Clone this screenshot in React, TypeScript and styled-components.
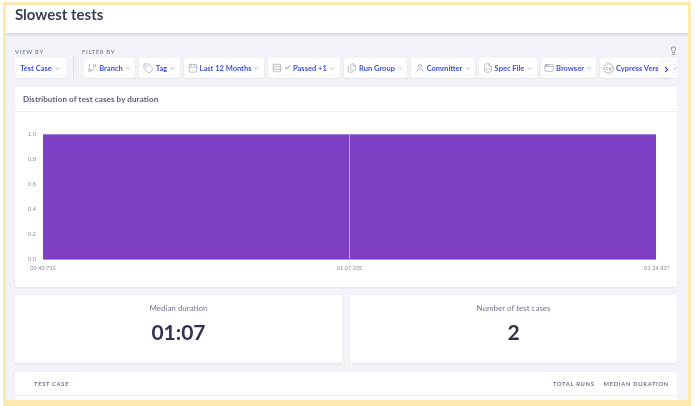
import React from 'react';
import styled, { createGlobalStyle } from 'styled-components';
import { ChevronDown, ChevronRight, GitBranch, Tag, Calendar, Rows3, Check, User, FileCode, AppWindow, Lightbulb, Files } from 'lucide-react';

const GlobalStyle = createGlobalStyle`
  html, body {
    margin: 0;
    padding: 0;
    background: #fff;
  }
  body {
    font-family: "Lato", "Noto Sans", sans-serif;
  }
`;

// the source screenshot is a soft, scaled-up capture
const Frame = styled.div`
  box-sizing: border-box;
  width: 688px;
  height: 404px;
  margin: 2px 0 0 3px;
  border: solid #fde9ae;
  border-width: 3px 3px 6px 3px;
  background: #f2f3f9;
  overflow: hidden;
  display: flex;
  flex-direction: column;
  filter: blur(0.5px);
`;

const Header = styled.header`
  flex: none;
  height: 28px;
  background: #fff;
  padding-left: 9px;
  box-shadow: 0 1px 3px rgba(60, 65, 100, 0.25);
  position: relative;
`;

const Title = styled.h1`
  margin: 0;
  font-size: 15px;
  line-height: 18px;
  font-weight: 700;
  color: #3a3e55;
`;

const Body = styled.main`
  flex: 1;
  min-height: 0;
  padding: 16px 11px 0 9px;
  display: flex;
  flex-direction: column;
  position: relative;
`;

const Toolbar = styled.div`
  display: flex;
  align-items: flex-end;
  height: 30px;
  margin-bottom: 8px;
`;

const Group = styled.div`
  min-width: 0;
  flex: ${p => (p.$grow ? 1 : 'none')};
  position: relative;
`;

const GroupLabel = styled.div`
  font-size: 5.8px;
  line-height: 7px;
  font-weight: 700;
  letter-spacing: 0.7px;
  color: #8a8ea6;
  margin: 0 0 3px ${p => p.$shift || 0}px;
`;

const Divider = styled.div`
  flex: none;
  width: 1px;
  height: 24px;
  background: #e0e2ec;
  margin: 0 10px 0 7px;
`;

const ChipRow = styled.div`
  display: flex;
  gap: 4px;
  overflow: hidden;
  padding-bottom: 1px;
`;

const Chip = styled.div`
  flex: none;
  box-sizing: border-box;
  width: ${p => p.$w}px;
  height: 20px;
  background: #fff;
  border-radius: 2px;
  box-shadow: 0 1px 2px rgba(60, 65, 100, 0.12);
  display: flex;
  align-items: center;
  justify-content: center;
  gap: 2px;
  font-size: 7.5px;
  font-weight: 700;
  color: #3f4fdc;
  white-space: nowrap;
  overflow: hidden;

  svg {
    flex: none;
  }
`;

const Green = styled.span`
  color: #1f9d6b;
  display: inline-flex;
  align-items: center;
  gap: 1px;
`;

const ScrollButton = styled.div`
  position: absolute;
  right: 3px;
  bottom: 2px;
  width: 16px;
  height: 16px;
  border-radius: 50%;
  background: #fff;
  box-shadow: 0 0 3px rgba(60, 65, 100, 0.2);
  display: flex;
  align-items: center;
  justify-content: center;
  color: #3f4bb8;
`;

const Hint = styled.div`
  position: absolute;
  right: 10px;
  top: 13px;
  color: #75777f;
  display: flex;
`;

const Card = styled.section`
  background: #fff;
  border-radius: 2px;
  box-shadow: 0 1px 2px rgba(60, 65, 100, 0.08);
`;

const ChartCard = styled(Card)`
  flex: none;
  height: 200px;
  margin-bottom: 8px;
  display: flex;
  flex-direction: column;
`;

const ChartTitle = styled.div`
  flex: none;
  box-sizing: border-box;
  height: 25px;
  padding: 0 8px;
  display: flex;
  align-items: center;
  border-bottom: 1px solid #eceef5;
  font-size: 8px;
  font-weight: 700;
  letter-spacing: 0.11px;
  color: #5a5e74;
`;

const ChartSvg = styled.svg`
  display: block;
  flex: 1;
  width: 100%;
  min-height: 0;
`;

const AxisText = styled.text`
  font-family: "Liberation Sans", sans-serif;
  font-size: 5.7px;
  fill: #8b8d96;
`;

const StatRow = styled.div`
  flex: none;
  display: grid;
  grid-template-columns: 1fr 1fr;
  gap: 8px;
  margin-bottom: 9px;
`;

const StatCard = styled(Card)`
  height: 68px;
  box-sizing: border-box;
  padding-top: 9px;
  text-align: center;
`;

const StatLabel = styled.div`
  font-size: 8px;
  line-height: 9px;
  color: #74788f;
`;

const StatValue = styled.div`
  margin-top: 5px;
  font-size: 21px;
  line-height: 28px;
  font-weight: 700;
  color: #2f3350;
`;

const TableCard = styled(Card)`
  flex: none;
  height: 40px;
`;

const TableHead = styled.div`
  box-sizing: border-box;
  height: 24px;
  padding: 0 8px 0 19px;
  display: flex;
  align-items: center;
  gap: 9px;
  border-bottom: 1px solid #eceef5;
`;

const HeadCell = styled.div`
  font-size: 5.8px;
  font-weight: 700;
  letter-spacing: 0.68px;
  color: #6f738c;
  margin-right: ${p => (p.$first ? 'auto' : '0')};
`;

const Chevron = () => <ChevronDown size={7} strokeWidth={2} color="#7f88b8" />;

const CypressIcon = () => (
  <svg width="11" height="11" viewBox="0 0 22 22" fill="none" stroke="#8b8e9c" strokeWidth="1.4">
    <circle cx="11" cy="11" r="9.5" />
    <path d="M9.5 8.8a2.6 2.6 0 1 0 0 4.4M12 8.5l1.8 5M16.5 8.5l-2.6 7-1.4.7" />
  </svg>
);

const iconProps = { size: 10, strokeWidth: 1.3, color: '#8b8e9c' };

const filters = [
  { w: 51, icon: <GitBranch {...iconProps} />, label: 'Branch' },
  { w: 41, icon: <Tag {...iconProps} size={11} />, label: 'Tag' },
  { w: 80, icon: <Calendar {...iconProps} />, label: 'Last 12 Months' },
  {
    w: 72,
    icon: <Rows3 {...iconProps} />,
    label: (
      <>
        <Green><Check size={7} strokeWidth={3} /></Green> Passed +1
      </>
    ),
  },
  { w: 63, icon: <Files {...iconProps} />, label: 'Run Group' },
  { w: 64, icon: <User {...iconProps} />, label: 'Committer' },
  { w: 58, icon: <FileCode {...iconProps} />, label: 'Spec File' },
  { w: 55, icon: <AppWindow {...iconProps} />, label: 'Browser' },
  { w: 81, icon: <CypressIcon />, label: 'Cypress Version' },
];

const yTicks = ['1.0', '0.8', '0.6', '0.4', '0.2', '0.0'];

const App: React.FC = () => (
  <>
    <GlobalStyle />
    <Frame>
      <Header>
        <Title>Slowest tests</Title>
      </Header>
      <Body>
        <Hint>
          <Lightbulb size={9} strokeWidth={2} />
        </Hint>
        <Toolbar>
          <Group>
            <GroupLabel>VIEW BY</GroupLabel>
            <ChipRow>
              <Chip $w={51}>
                Test Case <Chevron />
              </Chip>
            </ChipRow>
          </Group>
          <Divider />
          <Group $grow>
            <GroupLabel $shift={-2}>FILTER BY</GroupLabel>
            <ChipRow>
              {filters.map((f, i) => (
                <Chip key={i} $w={f.w}>
                  {f.icon}
                  <span>{f.label}</span>
                  <Chevron />
                </Chip>
              ))}
            </ChipRow>
            <ScrollButton>
              <ChevronRight size={9} strokeWidth={3} />
            </ScrollButton>
          </Group>
        </Toolbar>

        <ChartCard>
          <ChartTitle>Distribution of test cases by duration</ChartTitle>
          <ChartSvg viewBox="0 0 662 175" preserveAspectRatio="none">
            {yTicks.map((t, i) => (
              <AxisText key={t} x="21" y={23.5 + i * 25.1} textAnchor="end">
                {t}
              </AxisText>
            ))}
            <rect x="28" y="22" width="613" height="125" fill="#7e41c5" />
            <rect x="28" y="22" width="613" height="1" fill="#a884da" />
            <rect x="28" y="146.5" width="613" height="1" fill="#7426c8" />
            <rect x="334" y="22" width="1" height="125" fill="#b9a0de" />
            <AxisText x="28" y="158" textAnchor="middle">00:40.733</AxisText>
            <AxisText x="334.5" y="158" textAnchor="middle">01:07.335</AxisText>
            <AxisText x="642" y="158" textAnchor="middle">01:34.937</AxisText>
          </ChartSvg>
        </ChartCard>

        <StatRow>
          <StatCard>
            <StatLabel>Median duration</StatLabel>
            <StatValue>01:07</StatValue>
          </StatCard>
          <StatCard>
            <StatLabel>Number of test cases</StatLabel>
            <StatValue>2</StatValue>
          </StatCard>
        </StatRow>

        <TableCard>
          <TableHead>
            <HeadCell $first>TEST CASE</HeadCell>
            <HeadCell>TOTAL RUNS</HeadCell>
            <HeadCell>MEDIAN DURATION</HeadCell>
          </TableHead>
        </TableCard>
      </Body>
    </Frame>
  </>
);

export default App;
